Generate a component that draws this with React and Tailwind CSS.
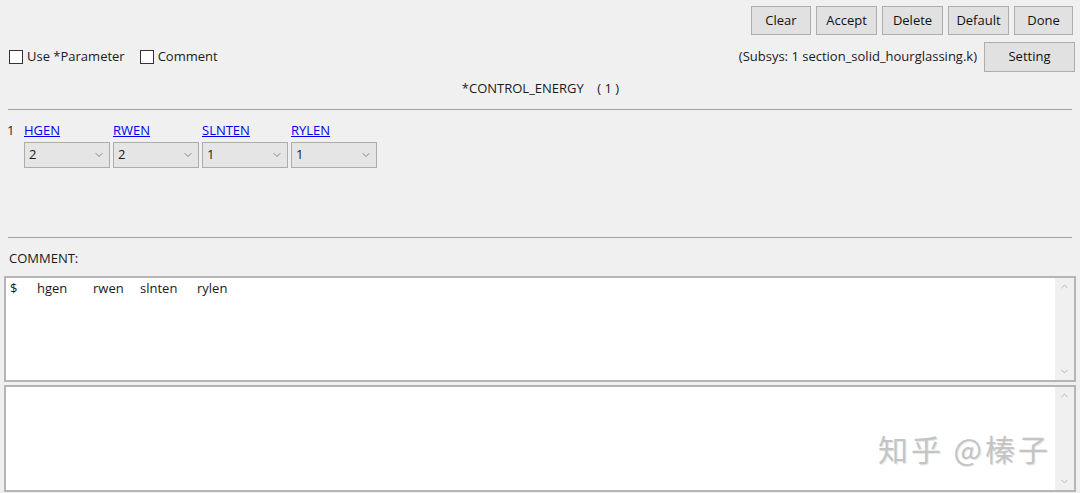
import { ChevronDown, ChevronUp } from 'lucide-react';

const fields = [
  { name: 'HGEN', value: '2' },
  { name: 'RWEN', value: '2' },
  { name: 'SLNTEN', value: '1' },
  { name: 'RYLEN', value: '1' },
];

function Btn({ children, className = '' }) {
  return (
    <button className={`h-[29px] bg-[#e1e1e1] border border-[#adadad] text-[13px] text-[#111] ${className}`}>
      {children}
    </button>
  );
}

function Check({ label }) {
  return (
    <label className="flex items-center gap-[4px]">
      <span className="w-[14px] h-[14px] border border-[#333] bg-white"></span>
      <span>{label}</span>
    </label>
  );
}

function TextBox({ children, className = '' }) {
  return (
    <div className={`flex border-2 border-[#b5b5b5] bg-white ${className}`}>
      <div className="flex-1 px-[2px] pt-[1px] text-[13px]">{children}</div>
      <div className="w-[19px] bg-[#f0f0f0] flex flex-col justify-between items-center py-[3px] text-[#b0b0b0]">
        <ChevronUp className="w-[11px] h-[11px]" strokeWidth={2} />
        <ChevronDown className="w-[11px] h-[11px]" strokeWidth={2} />
      </div>
    </div>
  );
}

export default function App() {
  return (
    <div className="w-[1080px] h-[493px] bg-[#f0f0f0] text-[13px] text-[#1a1a1a] overflow-hidden" style={{ fontFamily: '"Open Sans", "Noto Sans CJK SC", sans-serif' }}>
      {/* top buttons */}
      <div className="flex justify-end gap-[5px] pt-[6px] pr-[7px]">
        <Btn className="w-[60px]">Clear</Btn>
        <Btn className="w-[61px]">Accept</Btn>
        <Btn className="w-[61px]">Delete</Btn>
        <Btn className="w-[61px]">Default</Btn>
        <Btn className="w-[59px]">Done</Btn>
      </div>

      <div className="flex items-center justify-between pl-[9px] pr-[5px] mt-[7px]">
        <div className="flex items-center gap-[15px]">
          <Check label="Use *Parameter" />
          <Check label="Comment" />
        </div>
        <div className="flex items-center gap-[7px]">
          <span>(Subsys: 1 section_solid_hourglassing.k)</span>
          <Btn className="w-[91px] h-[30px]">Setting</Btn>
        </div>
      </div>

      <div className="text-center mt-[7px] pl-[1px]">
        *CONTROL_ENERGY&nbsp;&nbsp;&nbsp;&nbsp;( 1 )
      </div>

      <div className="mx-[8px] mt-[10px] border-t border-[#a0a0a0]"></div>

      {/* fields */}
      <div className="h-[127px] flex pt-[10px] pl-[7px]">
        <div className="w-[17px] leading-[20px]">1</div>
        <div className="flex gap-[3px]">
          {fields.map((f) => (
            <div key={f.name} className="flex flex-col w-[86px]">
              <a className="text-[#0000ee] underline leading-[20px]">{f.name}</a>
              <div className="mt-[2px] h-[26px] bg-[#e5e5e5] border border-[#acacac] flex items-center justify-between pl-[4px] pr-[4px]">
                <span>{f.value}</span>
                <ChevronDown className="w-[12px] h-[12px] text-[#666]" strokeWidth={1.5} />
              </div>
            </div>
          ))}
        </div>
      </div>

      <div className="mx-[8px] border-t border-[#a0a0a0]"></div>

      <div className="pl-[9px] mt-[10px] leading-[20px]">COMMENT:</div>

      <div className="flex flex-col gap-[3px] mx-[4px] mt-[8px]">
        <TextBox className="h-[106px]">
          <div className="flex pl-[2px]">
            <span className="w-[27px]">$</span>
            <span className="w-[56px]">hgen</span>
            <span className="w-[47px]">rwen</span>
            <span className="w-[57px]">slnten</span>
            <span>rylen</span>
          </div>
        </TextBox>
        <TextBox className="h-[107px]">
          <div className="flex justify-end items-center h-full pr-[2px] pt-[20px]">
            <span className="text-[30px] text-[#c4c4c4] tracking-[3px]" style={{ fontFamily: '"Noto Sans CJK SC", sans-serif', textShadow: '1px 1px 0 #e8e8e8' }}>知乎 @榛子</span>
          </div>
        </TextBox>
      </div>
    </div>
  );
}
